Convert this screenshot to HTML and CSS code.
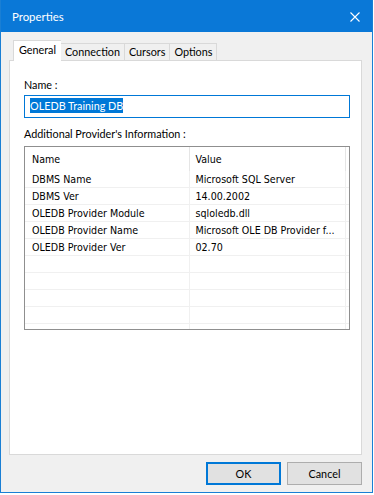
FILE: index.html
```html
<!DOCTYPE html>
<html lang="en">
<head>
    <meta charset="UTF-8">
    <meta name="viewport" content="width=device-width, initial-scale=1.0">
    <title>Properties</title>
    <link rel="stylesheet" href="styles.css">
</head>
<body>
    <div class="window">
        <div class="titlebar">
            <span class="title">Properties</span>
            <svg class="close" width="10" height="10" viewBox="0 0 10 10">
                <path d="M0.5 0.5 L9.5 9.5 M9.5 0.5 L0.5 9.5" stroke="#fff" stroke-width="1.1" fill="none"/>
            </svg>
        </div>
        <div class="client">
            <div class="tabs">
                <div class="tab active">General</div>
                <div class="tab">Connection</div>
                <div class="tab">Cursors</div>
                <div class="tab">Options</div>
            </div>
            <div class="panel">
                <div class="field-label">Name :</div>
                <div class="textbox"><span class="selection">OLEDB Training DB</span></div>
                <div class="field-label info">Additional Provider's Information :</div>
                <div class="listview">
                    <table>
                        <colgroup>
                            <col class="col-name">
                            <col class="col-value">
                            <col>
                        </colgroup>
                        <thead>
                            <tr><th>Name</th><th>Value</th><th></th></tr>
                        </thead>
                        <tbody>
                            <tr><td>DBMS Name</td><td>Microsoft SQL Server</td><td></td></tr>
                            <tr><td>DBMS Ver</td><td>14.00.2002</td><td></td></tr>
                            <tr><td>OLEDB Provider Module</td><td>sqloledb.dll</td><td></td></tr>
                            <tr><td>OLEDB Provider Name</td><td>Microsoft OLE DB Provider f...</td><td></td></tr>
                            <tr><td>OLEDB Provider Ver</td><td>02.70</td><td></td></tr>
                            <tr><td></td><td></td><td></td></tr>
                            <tr><td></td><td></td><td></td></tr>
                            <tr><td></td><td></td><td></td></tr>
                            <tr><td></td><td></td><td></td></tr>
                            <tr><td></td><td></td><td></td></tr>
                        </tbody>
                    </table>
                </div>
            </div>
            <div class="buttons">
                <button class="btn default">OK</button>
                <button class="btn">Cancel</button>
            </div>
        </div>
    </div>
</body>
</html>
```

FILE: styles.css
```css
body {
    margin: 0;
    background-color: #fff;
    font-family: Lato, "Liberation Sans", sans-serif;
    font-size: 10.8px;
    color: #000;
}

.window {
    box-sizing: border-box;
    width: 373px;
    height: 493px;
    background-color: #f0f0f0;
    border: 1px solid #1a7fd4;
    border-top: 0;
    display: flex;
    flex-direction: column;
}

.titlebar {
    height: 32px;
    flex-shrink: 0;
    background-color: #0a78d7;
    color: #fff;
    display: flex;
    align-items: center;
    justify-content: space-between;
    padding: 1px 12px 0 11px;
    box-sizing: border-box;
}

.title {
    font-size: 11.4px;
}

.close {
    display: block;
}

.client {
    flex: 1;
    display: flex;
    flex-direction: column;
    padding: 8px 10px 0 8px;
}

.tabs {
    display: flex;
    align-items: flex-end;
    height: 20px;
    padding-left: 4px;
}

.tab {
    height: 17px;
    line-height: 16px;
    padding: 0 4px;
    background-color: #f0f0f0;
    border: 1px solid #d9d9d9;
    border-bottom: 0;
    border-right: 0;
    box-sizing: border-box;
}

.tab:last-child {
    border-right: 1px solid #d9d9d9;
}

.tab.active {
    height: 21px;
    line-height: 18px;
    padding: 0 5px;
    margin-bottom: -1px;
    background-color: #fff;
    position: relative;
    z-index: 1;
}

.tab.active + .tab {
    border-left: 0;
}

.panel {
    box-sizing: border-box;
    height: 395px;
    background-color: #fff;
    border: 1px solid #d9d9d9;
    padding: 17px 11px 0 14px;
}

.field-label {
    line-height: 14px;
}

.textbox {
    box-sizing: border-box;
    height: 23px;
    margin-top: 3px;
    border: 1px solid #0078d7;
    padding: 3px 0 0 5px;
    line-height: 14px;
}

.selection {
    background-color: #0078d7;
    color: #fff;
    padding: 1px 0;
}

.info {
    margin-top: 9px;
}

.listview {
    box-sizing: border-box;
    height: 184px;
    margin-top: 5px;
    border: 1px solid #8f8f8f;
    overflow: hidden;
}

table {
    width: 100%;
    border-collapse: collapse;
    table-layout: fixed;
    font-family: "DejaVu Sans Condensed", "Liberation Sans", sans-serif;
    font-size: 10.6px;
}

.col-name {
    width: 164px;
}

.col-value {
    width: 156px;
}

th {
    height: 24px;
    font-weight: normal;
    text-align: left;
    padding: 0 0 0 7px;
    border-right: 1px solid #e5e5e5;
}

th:last-child {
    border-right: 0;
}

td {
    height: 16px;
    padding: 0 0 0 7px;
    border-bottom: 1px solid #f0f0f0;
    border-right: 1px solid #f0f0f0;
    white-space: nowrap;
    overflow: hidden;
}

td:nth-child(2),
th:nth-child(2) {
    padding-left: 6px;
}

td:last-child {
    border-right: 0;
}

.buttons {
    display: flex;
    justify-content: flex-end;
    gap: 6px;
    margin-top: 7px;
}

.btn {
    box-sizing: border-box;
    width: 75px;
    height: 23px;
    background-color: #e1e1e1;
    border: 1px solid #adadad;
    font-family: Lato, "Liberation Sans", sans-serif;
    font-size: 10.8px;
    color: #000;
    padding: 0;
}

.btn.default {
    border: 2px solid #0078d7;
}
```
